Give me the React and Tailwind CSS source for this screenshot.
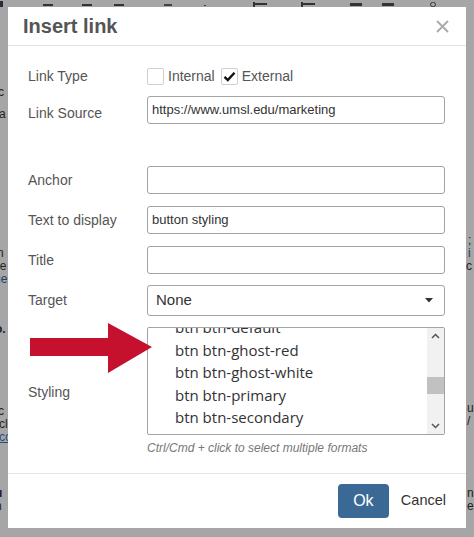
import React from "react";

const font = { fontFamily: '"Liberation Sans", Arial, sans-serif' };

function Check({ checked }) {
  return (
    <span className="flex h-[17px] w-[17px] items-center justify-center rounded-[2px] border border-[#cfcfcf] bg-white">
      {checked && (
        <svg width="13" height="11" viewBox="0 0 13 11">
          <path d="M1.5 5.8 L4.8 9 L11.5 1.8" fill="none" stroke="#111" strokeWidth="2.4" />
        </svg>
      )}
    </span>
  );
}

function Row({ label, className = "", labelClass = "", children }) {
  return (
    <div className={"flex items-center " + className}>
      <div className={"w-[119px] shrink-0 text-[14px] text-[#555] " + labelClass}>{label}</div>
      <div className="flex-1">{children}</div>
    </div>
  );
}

function TextInput({ value }) {
  return (
    <div className="flex h-[28px] items-center rounded-[3px] border border-[#a3a3a3] bg-white px-[4px] text-[13px] text-[#333]">
      {value}
    </div>
  );
}

const styles = ["btn btn-default", "btn btn-ghost-red", "btn btn-ghost-white", "btn btn-primary", "btn btn-secondary"];

export default function App() {
  return (
    <div className="relative flex h-[537px] w-[474px] flex-col overflow-hidden bg-[#a6a6a6]" style={font}>
      {/* toolbar behind the overlay */}
      <div className="flex h-[7px] items-end">
        <div className="h-[6px] w-[3px] bg-[#2b2b3a]" />
        <div className="ml-[40px] mb-[1px] h-[2px] w-[10px] bg-[#333]" />
        <div className="ml-[29px] mb-[1px] h-[2px] w-[10px] bg-[#333]" />
        <div className="ml-[22px] mb-[1px] h-[2px] w-[10px] bg-[#333]" />
        <div className="ml-[40px] mb-[1px] h-[2px] w-[8px] bg-[#444]" />
        <div className="ml-[32px] mb-[1px] h-[1px] w-[2px] bg-[#444]" />
        <div className="ml-[47px] h-[5px] w-[2px] bg-[#333]" />
        <div className="mb-[2px] h-[2px] w-[12px] bg-[#333]" />
        <div className="ml-[34px] h-[5px] w-[2px] bg-[#333]" />
        <div className="mb-[2px] h-[2px] w-[12px] bg-[#333]" />
        <div className="ml-[35px] mb-[1px] h-[3px] w-[12px] bg-[#333]" />
        <div className="ml-[20px] mb-[1px] h-[3px] w-[12px] bg-[#333]" />
        <div className="ml-[36px] h-[5px] w-[6px] rounded-full border border-[#333]" />
      </div>

      <div className="flex">
        {/* page text peeking out on the left */}
        <div className="w-[8px] shrink-0 overflow-hidden text-[12px] leading-[13px] text-[#222]">
          <div className="mt-[79px] -ml-[2px]">c</div>
          <div className="mt-[9px] -ml-[1px]">a</div>
          <div className="mt-[113px] -ml-[4px] text-[#1f4f80]">:</div>
          <div className="-ml-[3px]">n</div>
          <div className="-ml-[3px]">le</div>
          <div className="-ml-[6px] text-[#1f3f6a]">ue</div>
          <div className="mt-[37px] -ml-[5px] font-bold">o.</div>
          <div className="mt-[69px] -ml-[2px]">c</div>
          <div className="-ml-[1px]">cl</div>
          <div className="-ml-[1px] text-[#1f4f80] underline">cc</div>
          <div className="mt-[43px] -ml-[5px] font-bold">u</div>
          <div className="-ml-[5px]">n</div>
        </div>

        {/* dialog */}
        <div className="flex h-[521px] w-[458px] shrink-0 flex-col bg-white">
          <div className="flex h-[39px] shrink-0 items-center justify-between border-b border-[#e3e3e3] pl-[15px] pr-[17px]">
            <div className="text-[20px] font-bold text-[#555]">Insert link</div>
            <svg width="13" height="13" viewBox="0 0 13 13">
              <path d="M1 1 L12 12 M12 1 L1 12" stroke="#a9a9a9" strokeWidth="1.8" />
            </svg>
          </div>

          <div className="flex-1 pl-[20px] pr-[21px] pt-[16px]">
            <Row label="Link Type" className="h-[28px]" labelClass="pt-[1px]">
              <div className="flex items-center text-[14px] text-[#555]">
                <Check />
                <span className="ml-[4px]">Internal</span>
                <span className="ml-[6px]">
                  <Check checked />
                </span>
                <span className="ml-[4px]">External</span>
              </div>
            </Row>
            <Row label="Link Source" className="mt-[5px]" labelClass="pt-[8px]">
              <TextInput value="https://www.umsl.edu/marketing" />
            </Row>
            <Row label="Anchor" className="mt-[42px]">
              <TextInput value="" />
            </Row>
            <Row label="Text to display" className="mt-[12px]">
              <TextInput value="button styling" />
            </Row>
            <Row label="Title" className="mt-[12px]">
              <TextInput value="" />
            </Row>
            <Row label="Target" className="mt-[11px]">
              <div className="flex h-[31px] items-center justify-between rounded-[3px] border border-[#a3a3a3] bg-white pl-[8px] pr-[11px] text-[15px] text-[#333]">
                <span>None</span>
                <svg width="8" height="5" viewBox="0 0 8 5">
                  <path d="M0 0 L8 0 L4 4.5 Z" fill="#333" />
                </svg>
              </div>
            </Row>
            <Row label="Styling" className="mt-[11px]">
              <div className="flex h-[108px] overflow-hidden rounded-[2px] border border-[#a3a3a3] bg-white">
                <div
                  className="flex-1 overflow-hidden pl-[27px] text-[15px] leading-[22.5px] text-[#333]"
                  style={{ fontFamily: '"Open Sans", "Liberation Sans", sans-serif' }}
                >
                  <div className="-mt-[12px]">
                    {styles.map((s) => (
                      <div key={s}>{s}</div>
                    ))}
                  </div>
                </div>
                <div className="flex w-[17px] flex-col items-center bg-[#f1f1f1]">
                  <svg className="mt-[5px]" width="9" height="6" viewBox="0 0 9 6">
                    <path d="M1 5 L4.5 1.5 L8 5" fill="none" stroke="#555" strokeWidth="1.5" />
                  </svg>
                  <div className="mt-[38px] h-[17px] w-full bg-[#c1c1c1]" />
                  <svg className="mt-[29px]" width="9" height="6" viewBox="0 0 9 6">
                    <path d="M1 1 L4.5 4.5 L8 1" fill="none" stroke="#555" strokeWidth="1.5" />
                  </svg>
                </div>
              </div>
              <div className="mt-[4px] text-[12px] italic text-[#777]">Ctrl/Cmd + click to select multiple formats</div>
            </Row>
          </div>

          <div className="flex h-[55px] shrink-0 items-center justify-end border-t border-[#e5e5e5] pr-[20px]">
            <div className="flex h-[34px] w-[51px] items-center justify-center rounded-[4px] bg-[#3b6995] text-[16px] text-white">
              Ok
            </div>
            <div className="ml-[12px] text-[14.5px] text-[#333]">Cancel</div>
          </div>
        </div>

        {/* page text peeking out on the right */}
        <div className="w-[8px] shrink-0 overflow-hidden text-[12px] leading-[13px] text-[#222]">
          <div className="mt-[227px] ml-[2px]">;</div>
          <div className="ml-[2px] text-[#1f3f6a]">i</div>
          <div>c</div>
          <div className="mt-[129px] ml-[1px]">u</div>
          <div className="ml-[1px]">/</div>
          <div className="mt-[59px] ml-[1px]">nc</div>
          <div className="ml-[1px]">e</div>
        </div>
      </div>

      {/* red annotation arrow */}
      <svg className="absolute left-[29px] top-[322px]" width="124" height="52" viewBox="0 0 124 52">
        <path d="M1 16 L79 16 L79 1 L123 25 L79 51 L79 34 L1 34 Z" fill="#c5102e" />
      </svg>
    </div>
  );
}
